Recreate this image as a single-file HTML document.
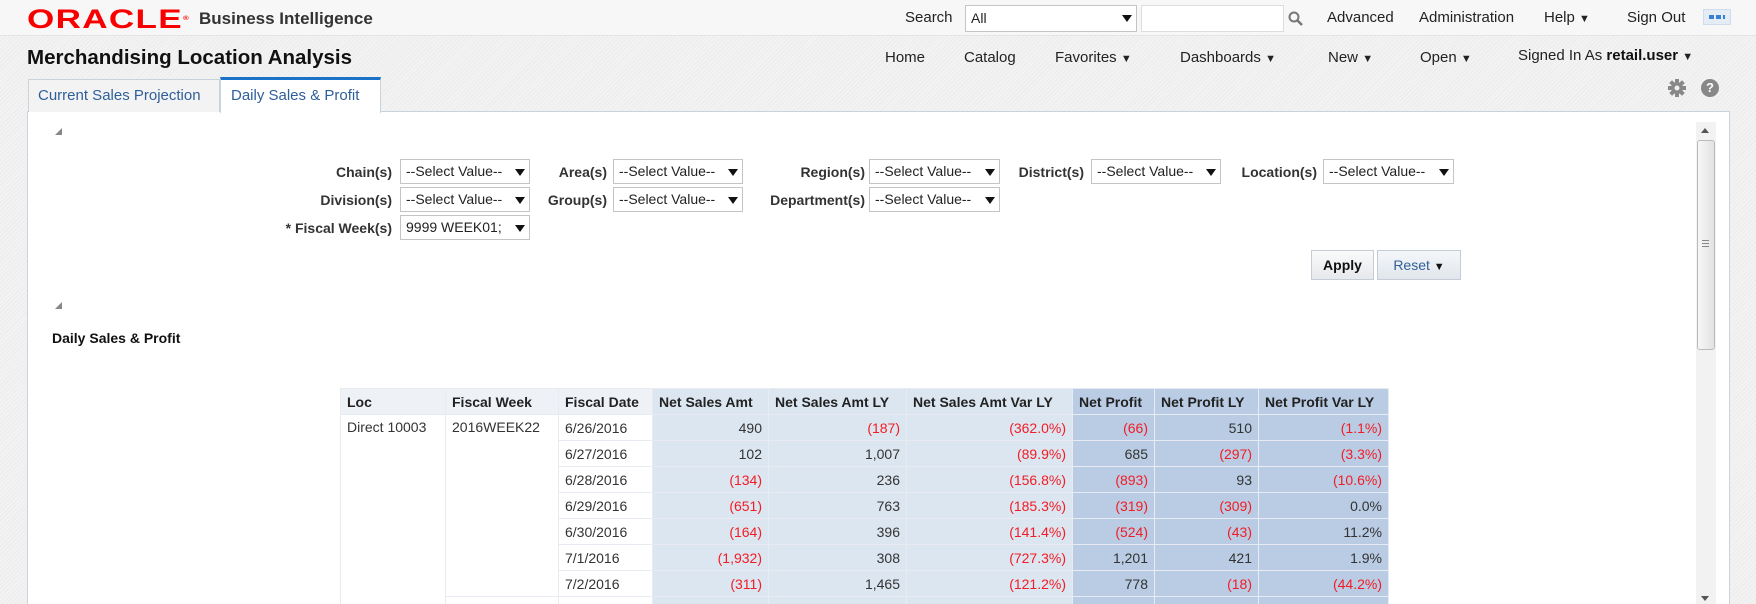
<!DOCTYPE html>
<html style="overflow:hidden;height:604px"><head><meta charset="utf-8"><style>
*{margin:0;padding:0;box-sizing:border-box}
body{width:1756px;height:604px;overflow:hidden;position:relative;font-family:"Liberation Sans",Arial,sans-serif;color:#333;
background:repeating-linear-gradient(135deg,#f3f3f3 0 2px,#ebebeb 2px 3px)}
.a{position:absolute;white-space:nowrap}
.top{position:absolute;left:0;top:0;width:1756px;height:36px;background:#f7f7f7;border-bottom:1px solid #e4e4e4}
.t15{font-size:15px;line-height:18px;color:#222}
.lbl{font-size:14px;font-weight:bold;color:#333;text-align:right}
.sel{position:absolute;height:25px;border:1px solid #c4c4c4;background:#fff;font-size:14px;line-height:23px;padding-left:5px;color:#222}
.sel:after{content:"";position:absolute;right:4px;top:9px;border-left:5px solid transparent;border-right:5px solid transparent;border-top:7px solid #111}
.dd{font-size:11px}
table{position:absolute;left:340px;top:388px;border-collapse:collapse;font-size:14px}
td,th{height:26px;padding:0 6px;border:1px solid #e8ecf2;white-space:nowrap}
th{font-weight:bold;color:#222;text-align:left}
td{color:#333}
.h1{background:#eef1f6}
.h2{background:#dce6f1}
.h3{background:#b9cce4}
.n{text-align:right}
.r{color:#f21c24}
.w{background:#fff}
</style></head><body>
<div class="top"></div>
<div class="a" style="left:27px;top:6px;font-size:27px;font-weight:bold;color:#f80000;letter-spacing:1px;line-height:26px;transform:scaleX(1.3);transform-origin:left">ORACLE<span style="font-size:6px;vertical-align:top">®</span></div>
<div class="a" style="left:199px;top:9px;font-size:17px;font-weight:bold;color:#333">Business Intelligence</div>
<div class="a t15" style="left:905px;top:9px">Search</div>
<div class="sel" style="left:965px;top:5px;width:172px;height:27px;line-height:25px">All</div>
<div class="a" style="left:1141px;top:5px;width:143px;height:27px;background:#fff;border:1px solid #ddd"></div>
<svg class="a" style="left:1288px;top:11px" width="16" height="16"><circle cx="6" cy="6" r="4.5" fill="none" stroke="#777" stroke-width="2"/><path d="M9.5 9.5L14 14" stroke="#777" stroke-width="2.5"/></svg>
<div class="a t15" style="left:1327px;top:9px">Advanced</div>
<div class="a t15" style="left:1419px;top:9px">Administration</div>
<div class="a t15" style="left:1544px;top:9px">Help <span class="dd">▼</span></div>
<div class="a t15" style="left:1627px;top:9px">Sign Out</div>
<div class="a" style="left:1703px;top:9px;width:28px;height:16px;background:#e4ecf5;border:1px solid #d0dcea"><div style="margin:5px 5px;height:4px;background:repeating-linear-gradient(90deg,#3a7fd6 0 5px,transparent 5px 7px)"></div></div>

<div class="a" style="left:27px;top:46px;font-size:20.5px;font-weight:bold;color:#111">Merchandising Location Analysis</div>
<div class="a t15" style="left:885px;top:49px">Home</div>
<div class="a t15" style="left:964px;top:49px">Catalog</div>
<div class="a t15" style="left:1055px;top:49px">Favorites <span class="dd">▼</span></div>
<div class="a t15" style="left:1180px;top:49px">Dashboards <span class="dd">▼</span></div>
<div class="a t15" style="left:1328px;top:49px">New <span class="dd">▼</span></div>
<div class="a t15" style="left:1420px;top:49px">Open <span class="dd">▼</span></div>
<div class="a t15" style="left:1518px;top:47px">Signed In As <b style="color:#111">retail.user</b> <span class="dd">▼</span></div>
<svg class="a" style="left:1666px;top:78px" width="22" height="20" viewBox="0 0 22 20"><g fill="#888"><circle cx="11" cy="10" r="6"/><rect x="9" y="1" width="4" height="18"/><rect x="2" y="8" width="18" height="4"/><rect x="9" y="1" width="4" height="18" transform="rotate(45 11 10)"/><rect x="9" y="1" width="4" height="18" transform="rotate(-45 11 10)"/></g><circle cx="11" cy="10" r="2.5" fill="#eee"/></svg>
<div class="a" style="left:1701px;top:79px;width:18px;height:18px;border-radius:50%;background:#888;color:#fff;font-size:13px;font-weight:bold;text-align:center;line-height:18px">?</div>

<div class="a" style="left:27px;top:111px;width:1703px;height:500px;background:#fff;border:1px solid #c9d3de"></div>
<div class="a" style="left:28px;top:79px;width:192px;height:33px;background:#f3f3f3;border:1px solid #c9d3de;border-bottom:none;font-size:15px;color:#2f5f99;line-height:32px;padding-left:9px">Current Sales Projection</div>
<div class="a" style="left:220px;top:77px;width:161px;height:36px;background:#fff;border:1px solid #c9d3de;border-top:3px solid #1a73c8;border-bottom:none;font-size:15px;color:#2f5f99;line-height:31px;padding-left:10px">Daily Sales &amp; Profit</div>

<div class="a" style="left:55px;top:128px;width:0;height:0;border-left:7px solid transparent;border-bottom:7px solid #888"></div>
<div class="a" style="left:55px;top:302px;width:0;height:0;border-left:7px solid transparent;border-bottom:7px solid #888"></div>

<div class="a lbl" style="left:250px;width:142px;top:164px">Chain(s)</div>
<div class="sel" style="left:400px;top:159px;width:130px">--Select Value--</div>
<div class="a lbl" style="left:500px;width:107px;top:164px">Area(s)</div>
<div class="sel" style="left:613px;top:159px;width:130px">--Select Value--</div>
<div class="a lbl" style="left:760px;width:105px;top:164px">Region(s)</div>
<div class="sel" style="left:869px;top:159px;width:131px">--Select Value--</div>
<div class="a lbl" style="left:1000px;width:84px;top:164px">District(s)</div>
<div class="sel" style="left:1091px;top:159px;width:130px">--Select Value--</div>
<div class="a lbl" style="left:1220px;width:97px;top:164px">Location(s)</div>
<div class="sel" style="left:1323px;top:159px;width:131px">--Select Value--</div>

<div class="a lbl" style="left:250px;width:142px;top:192px">Division(s)</div>
<div class="sel" style="left:400px;top:187px;width:130px">--Select Value--</div>
<div class="a lbl" style="left:500px;width:107px;top:192px">Group(s)</div>
<div class="sel" style="left:613px;top:187px;width:130px">--Select Value--</div>
<div class="a lbl" style="left:700px;width:165px;top:192px">Department(s)</div>
<div class="sel" style="left:869px;top:187px;width:131px">--Select Value--</div>

<div class="a lbl" style="left:200px;width:192px;top:220px">* Fiscal Week(s)</div>
<div class="sel" style="left:400px;top:215px;width:130px">9999 WEEK01;</div>

<div class="a" style="left:1311px;top:250px;width:63px;height:30px;border:1px solid #c4ccd6;background:linear-gradient(#fafafa,#e6e9ed);font-size:14px;font-weight:bold;color:#111;text-align:center;line-height:28px">Apply</div>
<div class="a" style="left:1377px;top:250px;width:84px;height:30px;border:1px solid #c4ccd6;background:linear-gradient(#f4f7fa,#e1e6ec);font-size:14px;color:#2f5f99;text-align:center;line-height:28px">Reset <span class="dd" style="color:#111">▼</span></div>

<div class="a" style="left:52px;top:330px;font-size:14px;font-weight:bold;color:#111">Daily Sales &amp; Profit</div>

<div class="a" style="left:1696px;top:122px;width:20px;height:482px;background:#f2f2f2"></div>
<div class="a" style="left:1701px;top:128px;border-left:4px solid transparent;border-right:4px solid transparent;border-bottom:5px solid #555"></div>
<div class="a" style="left:1697px;top:140px;width:18px;height:210px;border:1px solid #bbb;border-radius:3px;background:linear-gradient(90deg,#f7f7f7,#e2e2e2)"></div>
<div class="a" style="left:1702px;top:240px;width:7px;height:7px;border-top:1px solid #888;border-bottom:1px solid #888"><div style="margin-top:2px;border-top:1px solid #888"></div></div>
<div class="a" style="left:1701px;top:596px;border-left:4px solid transparent;border-right:4px solid transparent;border-top:5px solid #555"></div>

<table>
<colgroup><col style="width:105px"><col style="width:113px"><col style="width:94px"><col style="width:116px"><col style="width:138px"><col style="width:166px"><col style="width:82px"><col style="width:104px"><col style="width:130px"></colgroup>
<tr><th class="h1">Loc</th><th class="h1">Fiscal Week</th><th class="h1">Fiscal Date</th><th class="h2">Net Sales Amt</th><th class="h2">Net Sales Amt LY</th><th class="h2">Net Sales Amt Var LY</th><th class="h3">Net Profit</th><th class="h3">Net Profit LY</th><th class="h3">Net Profit Var LY</th></tr>
<tr><td class="w" rowspan="8" style="vertical-align:top;padding-top:4px">Direct 10003</td><td class="w" rowspan="7" style="vertical-align:top;padding-top:4px">2016WEEK22</td><td class="w">6/26/2016</td><td class="h2 n">490</td><td class="h2 n r">(187)</td><td class="h2 n r">(362.0%)</td><td class="h3 n r">(66)</td><td class="h3 n">510</td><td class="h3 n r">(1.1%)</td></tr>
<tr><td class="w">6/27/2016</td><td class="h2 n">102</td><td class="h2 n">1,007</td><td class="h2 n r">(89.9%)</td><td class="h3 n">685</td><td class="h3 n r">(297)</td><td class="h3 n r">(3.3%)</td></tr>
<tr><td class="w">6/28/2016</td><td class="h2 n r">(134)</td><td class="h2 n">236</td><td class="h2 n r">(156.8%)</td><td class="h3 n r">(893)</td><td class="h3 n">93</td><td class="h3 n r">(10.6%)</td></tr>
<tr><td class="w">6/29/2016</td><td class="h2 n r">(651)</td><td class="h2 n">763</td><td class="h2 n r">(185.3%)</td><td class="h3 n r">(319)</td><td class="h3 n r">(309)</td><td class="h3 n">0.0%</td></tr>
<tr><td class="w">6/30/2016</td><td class="h2 n r">(164)</td><td class="h2 n">396</td><td class="h2 n r">(141.4%)</td><td class="h3 n r">(524)</td><td class="h3 n r">(43)</td><td class="h3 n">11.2%</td></tr>
<tr><td class="w">7/1/2016</td><td class="h2 n r">(1,932)</td><td class="h2 n">308</td><td class="h2 n r">(727.3%)</td><td class="h3 n">1,201</td><td class="h3 n">421</td><td class="h3 n">1.9%</td></tr>
<tr><td class="w">7/2/2016</td><td class="h2 n r">(311)</td><td class="h2 n">1,465</td><td class="h2 n r">(121.2%)</td><td class="h3 n">778</td><td class="h3 n r">(18)</td><td class="h3 n r">(44.2%)</td></tr>
<tr><td class="w">&nbsp;</td><td class="w"></td><td class="h2"></td><td class="h2"></td><td class="h2"></td><td class="h3"></td><td class="h3"></td><td class="h3"></td></tr>
</table>
</body></html>
